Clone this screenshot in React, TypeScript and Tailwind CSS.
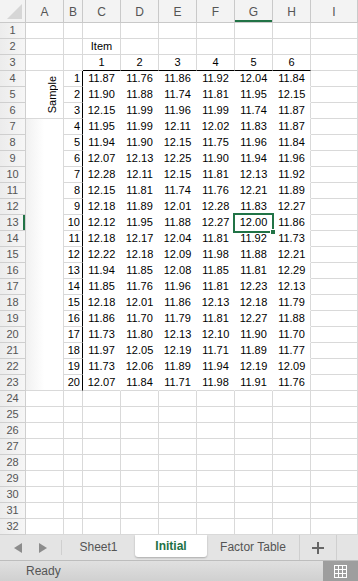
import React from 'react'

// Sample x Item measurements, rows 1..20
const data: string[][] = [
  ['11.87', '11.76', '11.86', '11.92', '12.04', '11.84'],
  ['11.90', '11.88', '11.74', '11.81', '11.95', '12.15'],
  ['12.15', '11.99', '11.96', '11.99', '11.74', '11.87'],
  ['11.95', '11.99', '12.11', '12.02', '11.83', '11.87'],
  ['11.94', '11.90', '12.15', '11.75', '11.96', '11.84'],
  ['12.07', '12.13', '12.25', '11.90', '11.94', '11.96'],
  ['12.28', '12.11', '12.15', '11.81', '12.13', '11.92'],
  ['12.15', '11.81', '11.74', '11.76', '12.21', '11.89'],
  ['12.18', '11.89', '12.01', '12.28', '11.83', '12.27'],
  ['12.12', '11.95', '11.88', '12.27', '12.00', '11.86'],
  ['12.18', '12.17', '12.04', '11.81', '11.92', '11.73'],
  ['12.22', '12.18', '12.09', '11.98', '11.88', '12.21'],
  ['11.94', '11.85', '12.08', '11.85', '11.81', '12.29'],
  ['11.85', '11.76', '11.96', '11.81', '12.23', '12.13'],
  ['12.18', '12.01', '11.86', '12.13', '12.18', '11.79'],
  ['11.86', '11.70', '11.79', '11.81', '12.27', '11.88'],
  ['11.73', '11.80', '12.13', '12.10', '11.90', '11.70'],
  ['11.97', '12.05', '12.19', '11.71', '11.89', '11.77'],
  ['11.73', '12.06', '11.89', '11.94', '12.19', '12.09'],
  ['12.07', '11.84', '11.71', '11.98', '11.91', '11.76'],
]

const letters = ['A', 'B', 'C', 'D', 'E', 'F', 'G', 'H', 'I']
const rows = Array.from({ length: 32 }, (_, i) => i + 1)

const cell = 'border-r border-b border-[#d9d9d9] flex items-center justify-center overflow-hidden whitespace-nowrap'

function Row({ r }: { r: number }) {
  const items: React.ReactNode[] = []
  const isData = r >= 4 && r <= 23
  items.push(
    <div
      key="h"
      className="relative border-r border-b border-[#cfcfcf] bg-gradient-to-r from-[#ececec] to-[#f6f6f6] flex items-center justify-center text-[11px] text-[#555]"
    >
      {r}
      {r === 13 && <div className="absolute right-0 top-0 bottom-0 w-[2px] bg-[#217346]" />}
    </div>
  )

  // column A (merged blocks on 4-6 and 7-23)
  if (r === 4) {
    items.push(
      <div key="a" className="row-span-3 border-r border-b border-[#d9d9d9] flex items-center justify-end pr-[4px]">
        <span className="[writing-mode:vertical-rl] rotate-180 text-[11px] leading-[13px] text-black">Sample</span>
      </div>
    )
  } else if (r === 7) {
    items.push(
      <div key="a" className="row-span-17 border-r border-b border-[#d9d9d9] bg-gradient-to-r from-[#f1f1f1] via-white via-50% to-white" />
    )
  } else if (!isData) {
    items.push(<div key="a" className={cell} />)
  }

  // column B
  items.push(
    <div
      key="b"
      className={`border-r border-b ${isData ? 'border-r-black border-b-[#d9d9d9]' : 'border-[#d9d9d9]'} flex items-center justify-end pr-[2px] text-[11px] text-black`}
    >
      {isData ? r - 3 : ''}
    </div>
  )

  // columns C..H
  for (let c = 0; c < 6; c++) {
    let border = 'border-[#d9d9d9]'
    let text: React.ReactNode = ''
    if (r === 2 && c === 0) text = 'Item'
    if (r === 3) {
      text = String(c + 1)
      border = 'border-r-[#d9d9d9] border-b-black'
    }
    if (isData) {
      text = data[r - 4][c]
      const right = c === 5 ? 'border-r-[#d9d9d9]' : 'border-r-white'
      const bottom = r === 23 ? 'border-b-[#d9d9d9]' : 'border-b-white'
      border = `${right} ${bottom}`
    }
    items.push(
      <div key={'c' + c} className={`border-r border-b ${border} flex items-center justify-center text-[11px] text-black`}>
        {text}
      </div>
    )
  }

  items.push(<div key="i" className={cell} />)
  return <>{items}</>
}

export default function App() {
  return (
    <div className="w-[358px] h-[581px] flex flex-col overflow-hidden bg-white font-['Liberation_Sans',Arial,sans-serif]">
      <div className="relative h-[535px] overflow-hidden">
        <div className="grid grid-cols-[26px_38px_19px_38px_38px_38px_38px_38px_38px_1fr] grid-rows-[23px_repeat(32,16px)]">
          {/* corner */}
          <div className="border-r border-b border-[#c9c9c9] bg-[#f3f3f3] flex items-end justify-end p-[3px]">
            <svg width="15" height="15" viewBox="0 0 15 15">
              <polygon points="15,0 15,15 0,15" fill="#d6d6d6" />
            </svg>
          </div>
          {letters.map(l => (
            <div
              key={l}
              className="relative border-r border-b border-[#c9c9c9] bg-[#f3f3f3] flex items-center justify-center pt-[2px] text-[12px] text-[#555]"
            >
              {l}
              {l === 'G' && <div className="absolute left-0 right-0 bottom-0 h-[2px] bg-[#217346]" />}
            </div>
          ))}
          {rows.map(r => (
            <Row key={r} r={r} />
          ))}
        </div>

        {/* active cell G13 */}
        <div className="absolute left-[233px] top-[213px] w-[41px] h-[20px] border-2 border-[#217346]" />
        <div className="absolute left-[270px] top-[229px] w-[6px] h-[6px] bg-[#217346] border border-white" />
      </div>

      {/* sheet tabs */}
      <div className="h-[26px] flex bg-[#e4e4e4] border-b border-[#bdbdbd] text-[12px] text-[#555]">
        <div className="w-[62px] flex items-center justify-center gap-[17px] my-[5px] border-r border-[#cfcfcf]">
          <svg width="8" height="10" viewBox="0 0 8 10">
            <polygon points="8,0 8,10 0,5" fill="#8c8c8c" />
          </svg>
          <svg width="8" height="10" viewBox="0 0 8 10">
            <polygon points="0,0 0,10 8,5" fill="#8c8c8c" />
          </svg>
        </div>
        <div className="w-[73px] flex items-center justify-center pb-[2px]">Sheet1</div>
        <div className="w-[72px] h-[22px] bg-white rounded-b-[3px] shadow-[0_1px_2px_rgba(0,0,0,0.25)] flex items-center justify-center font-bold text-[#1e7145]">
          Initial
        </div>
        <div className="w-[93px] flex items-center justify-center pb-[2px] border-r border-[#cfcfcf]">Factor Table</div>
        <div className="w-[37px] flex items-center justify-center border-r border-[#cfcfcf]">
          <svg width="12" height="12" viewBox="0 0 12 12">
            <rect x="5" y="0" width="2" height="12" fill="#666" />
            <rect x="0" y="5" width="12" height="2" fill="#666" />
          </svg>
        </div>
        <div className="flex-1" />
      </div>

      {/* status bar */}
      <div className="flex-1 flex bg-gradient-to-b from-[#e0e0e0] to-[#d0d0d0]">
        <div className="flex-1 flex items-center pl-[26px] text-[12px] text-[#555]">Ready</div>
        <div className="w-[35px] bg-[#9e9e9e] flex items-center justify-center">
          <svg width="13" height="13" viewBox="0 0 13 13" fill="none" stroke="white" strokeWidth="1">
            <rect x="0.5" y="0.5" width="12" height="12" />
            <line x1="4.5" y1="0.5" x2="4.5" y2="12.5" />
            <line x1="8.5" y1="0.5" x2="8.5" y2="12.5" />
            <line x1="0.5" y1="4.5" x2="12.5" y2="4.5" />
            <line x1="0.5" y1="8.5" x2="12.5" y2="8.5" />
          </svg>
        </div>
      </div>
    </div>
  )
}
